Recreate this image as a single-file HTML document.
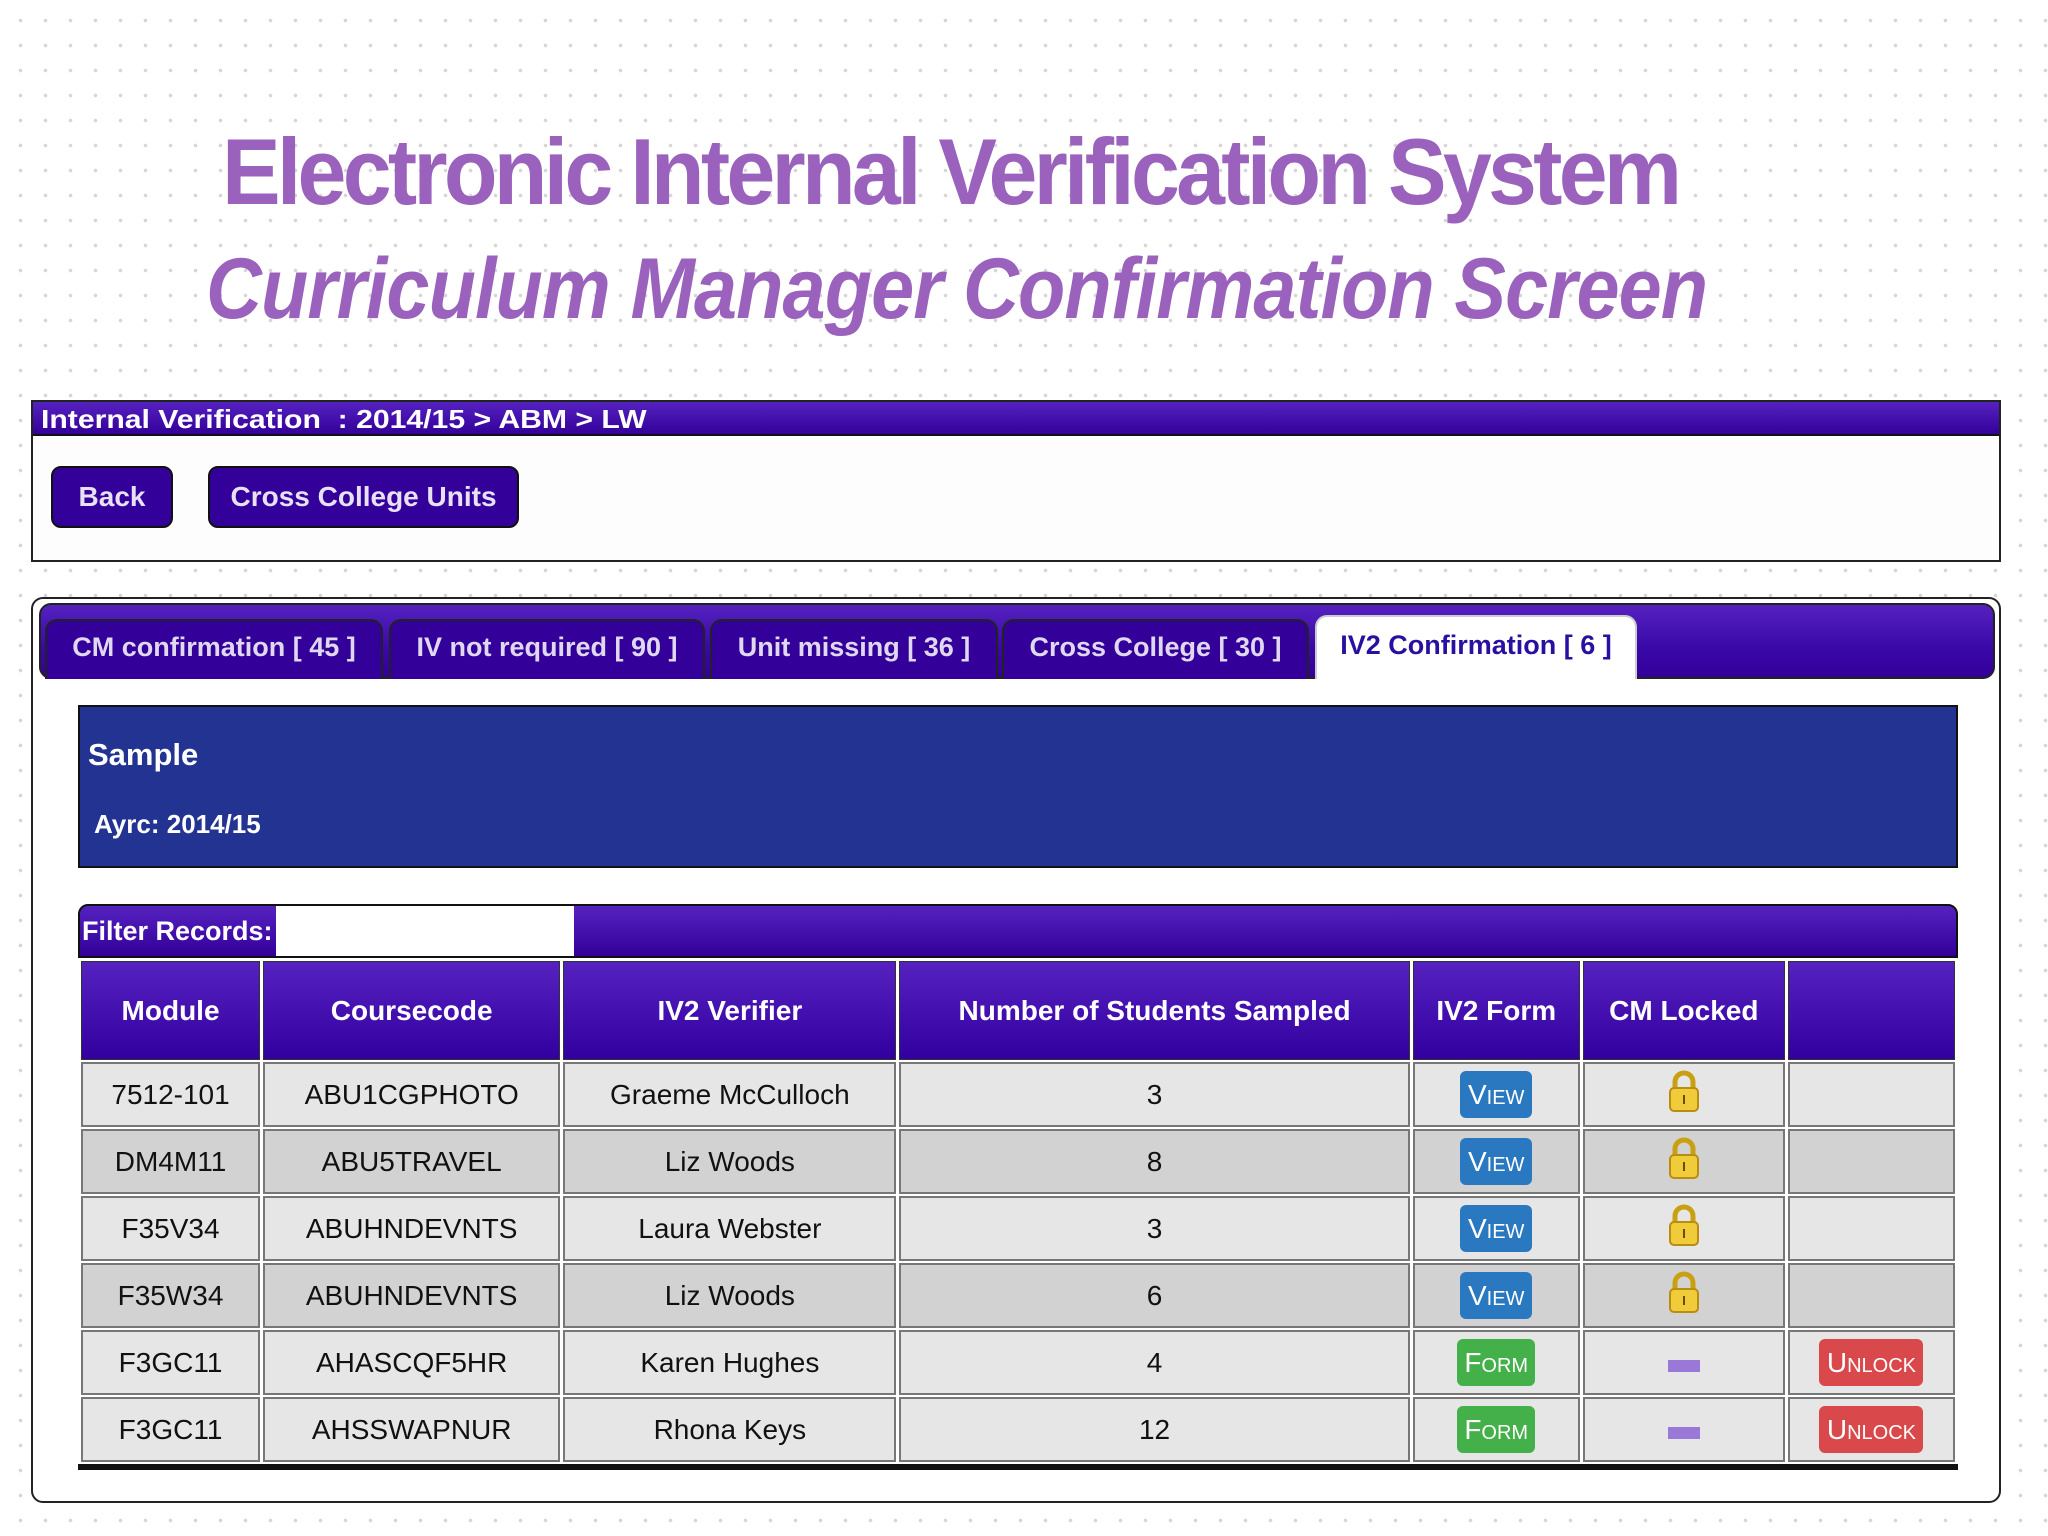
<!DOCTYPE html>
<html><head><meta charset="utf-8"><style>
*{box-sizing:border-box;margin:0;padding:0}
body{width:2048px;height:1536px;position:relative;overflow:hidden;background:#fff;
background-image:radial-gradient(circle,#d6d6d6 1.6px,transparent 2px);background-size:25px 25px;background-position:8px 8px;
font-family:"Liberation Sans",sans-serif}
.a{position:absolute}
h1{position:absolute;left:222px;top:118px;font-size:94px;font-weight:bold;color:#9b62bd;letter-spacing:-4px;white-space:nowrap;transform:scaleX(0.935);transform-origin:0 0}
h2{position:absolute;left:206px;top:240px;font-size:86px;font-weight:bold;font-style:italic;color:#9b62bd;letter-spacing:-1px;white-space:nowrap;transform:scaleX(0.9);transform-origin:0 0}
.box1{left:31px;top:400px;width:1970px;height:162px;border:2px solid #222;background:#fdfdfd}
.bar{left:0;top:0;width:100%;height:34px;background:linear-gradient(#5522c0,#33009a);color:#fff;font-weight:bold;font-size:26px;padding:2px 8px;border-bottom:2px solid #111}
.bar span{display:inline-block;transform:scaleX(1.16);transform-origin:0 0;white-space:nowrap}
.btn{background:#33009a;border:2px solid #111;border-radius:10px;color:#e8e0f4;font-weight:bold;font-size:28px;text-align:center;line-height:58px;height:62px}
.box2{left:31px;top:597px;width:1970px;height:906px;border:2px solid #222;border-radius:12px;background:#fff}
.tabbar{left:6px;top:4px;width:1956px;height:76px;background:linear-gradient(#5522c0 0%,#3a08a8 60%,#33009a);border:2px solid #222;border-radius:12px}
.tab{top:14px;height:60px;background:#33009a;border:2px solid #222;border-bottom:none;border-radius:12px 12px 0 0;color:#e0d8f0;font-weight:bold;font-size:27px;text-align:center;line-height:52px}
.tab.act{background:#fff;color:#2a10a0;border-color:#ccc;height:64px;line-height:56px}
.sample{left:45px;top:106px;width:1880px;height:163px;background:#233391;border:2px solid #111;color:#fff;font-weight:bold}
.filter{left:45px;top:305px;width:1880px;height:54px;background:linear-gradient(#5522c0,#33009a);border:2px solid #111;border-radius:10px 10px 0 0;color:#fff;font-weight:bold;font-size:27px}
table{position:absolute;left:45px;top:360px;width:1880px;border-collapse:separate;border-spacing:3px 2px;background:#fff;border-bottom:6px solid #111}
th{height:99px;background:linear-gradient(#5522c0,#3300a0);color:#fff;font-size:28px;border:1px solid #333}
td{height:65px;text-align:center;font-size:28px;color:#111;border:2px solid #777;background:#e6e6e6}
tr.g td{background:#d2d2d2}
.v,.f,.u{display:inline-block;color:#fff;font-variant:small-caps;font-size:28px;border-radius:6px;height:47px;line-height:47px}
.v{background:#2a78bf;width:72px}
.f{background:#44b04a;width:78px}
.u{background:#d9484a;width:104px}
.m{display:inline-block;width:32px;height:12px;background:#9a78d8;margin-top:14px}
</style></head><body>
<h1>Electronic Internal Verification System</h1>
<h2>Curriculum Manager Confirmation Screen</h2>
<div class="a box1">
<div class="a bar"><span>Internal Verification &nbsp;: 2014/15 &gt; ABM &gt; LW</span></div>
<div class="a btn" style="left:18px;top:64px;width:122px">Back</div>
<div class="a btn" style="left:175px;top:64px;width:311px">Cross College Units</div>
</div>
<div class="a box2">
<div class="a tabbar">
<div class="a tab" style="left:4px;width:338px">CM confirmation [ 45 ]</div>
<div class="a tab" style="left:348px;width:316px">IV not required [ 90 ]</div>
<div class="a tab" style="left:669px;width:288px">Unit missing [ 36 ]</div>
<div class="a tab" style="left:961px;width:307px">Cross College [ 30 ]</div>
<div class="a tab act" style="left:1274px;width:322px;top:10px">IV2 Confirmation [ 6 ]</div>
</div>
<div class="a sample"><div class="a" style="left:8px;top:30px;font-size:31px">Sample</div><div class="a" style="left:14px;top:102px;font-size:26px">Ayrc: 2014/15</div></div>
<div class="a filter"><span class="a" style="left:2px;top:10px">Filter Records:</span><div class="a" style="left:196px;top:0;width:298px;height:50px;background:#fff"></div></div>
<table>
<tr><th style="width:179px">Module</th><th style="width:297px">Coursecode</th><th style="width:333px">IV2 Verifier</th><th style="width:510px">Number of Students Sampled</th><th style="width:167px">IV2 Form</th><th style="width:202px">CM Locked</th><th style="width:167px"></th></tr>
<tr><td>7512-101</td><td>ABU1CGPHOTO</td><td>Graeme McCulloch</td><td>3</td><td><span class="v">View</span></td><td><svg width="40" height="44" viewBox="0 0 40 44"><path d="M11 20V13a9 9 0 0 1 18 0v7" fill="none" stroke="#c9a010" stroke-width="5"/><rect x="6" y="19" width="28" height="23" rx="4" fill="#f1cc3a" stroke="#b88d10" stroke-width="2"/><rect x="19" y="26" width="2" height="9" fill="#6b4c00"/></svg></td><td></td></tr>
<tr class="g"><td>DM4M11</td><td>ABU5TRAVEL</td><td>Liz Woods</td><td>8</td><td><span class="v">View</span></td><td><svg width="40" height="44" viewBox="0 0 40 44"><path d="M11 20V13a9 9 0 0 1 18 0v7" fill="none" stroke="#c9a010" stroke-width="5"/><rect x="6" y="19" width="28" height="23" rx="4" fill="#f1cc3a" stroke="#b88d10" stroke-width="2"/><rect x="19" y="26" width="2" height="9" fill="#6b4c00"/></svg></td><td></td></tr>
<tr><td>F35V34</td><td>ABUHNDEVNTS</td><td>Laura Webster</td><td>3</td><td><span class="v">View</span></td><td><svg width="40" height="44" viewBox="0 0 40 44"><path d="M11 20V13a9 9 0 0 1 18 0v7" fill="none" stroke="#c9a010" stroke-width="5"/><rect x="6" y="19" width="28" height="23" rx="4" fill="#f1cc3a" stroke="#b88d10" stroke-width="2"/><rect x="19" y="26" width="2" height="9" fill="#6b4c00"/></svg></td><td></td></tr>
<tr class="g"><td>F35W34</td><td>ABUHNDEVNTS</td><td>Liz Woods</td><td>6</td><td><span class="v">View</span></td><td><svg width="40" height="44" viewBox="0 0 40 44"><path d="M11 20V13a9 9 0 0 1 18 0v7" fill="none" stroke="#c9a010" stroke-width="5"/><rect x="6" y="19" width="28" height="23" rx="4" fill="#f1cc3a" stroke="#b88d10" stroke-width="2"/><rect x="19" y="26" width="2" height="9" fill="#6b4c00"/></svg></td><td></td></tr>
<tr><td>F3GC11</td><td>AHASCQF5HR</td><td>Karen Hughes</td><td>4</td><td><span class="f">Form</span></td><td><span class="m"></span></td><td><span class="u">Unlock</span></td></tr>
<tr><td>F3GC11</td><td>AHSSWAPNUR</td><td>Rhona Keys</td><td>12</td><td><span class="f">Form</span></td><td><span class="m"></span></td><td><span class="u">Unlock</span></td></tr>
</table>
</div>
</body></html>
